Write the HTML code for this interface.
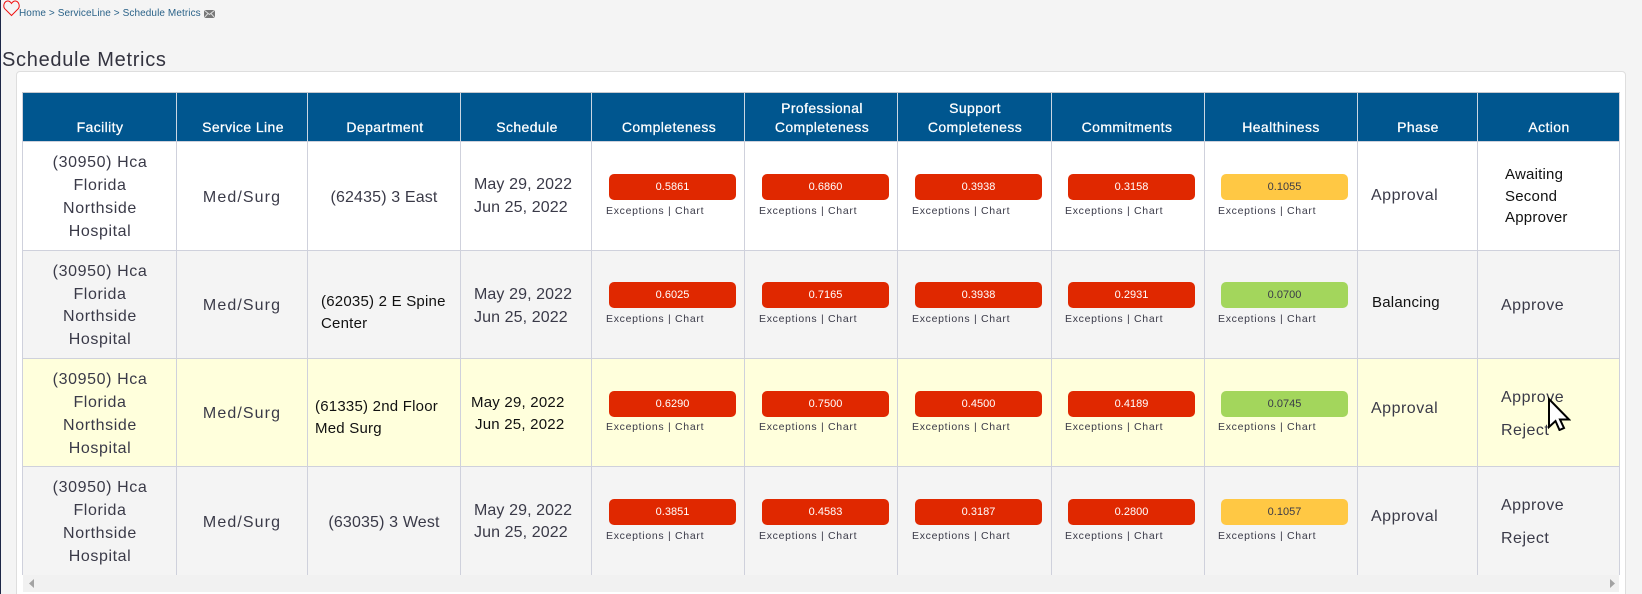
<!DOCTYPE html>
<html><head><meta charset="utf-8"><title>Schedule Metrics</title>
<style>
html,body{margin:0;padding:0;width:1642px;height:594px;overflow:hidden}
body{background:#f4f4f4;font-family:"Liberation Sans",sans-serif;color:#3a3a48}
#w{position:absolute;left:0;top:0;width:1642px;height:594px;overflow:hidden;background:#f4f4f4}
#w div{position:absolute}
.bg{left:23px;width:1596px}
.v{width:1px;top:93px;height:482px;background:#cfd1dc}
.hv{width:1px;top:93px;height:48px;background:#c9d6e3}
.h{background:#cfd1dc;height:1px;left:22px;width:1598px}
.t,.l,.k,.th,.d{white-space:nowrap;line-height:22px;height:22px}
.t{font-size:16px;letter-spacing:.6px;width:200px;text-align:center}
.m{letter-spacing:1.1px}
.p{letter-spacing:.15px}
.l{font-size:16px;letter-spacing:.5px}
.d{font-size:16px;letter-spacing:.1px}
.k{font-size:15px;letter-spacing:.22px;color:#111}
.th{color:#fff;font-size:14px;letter-spacing:.4px;width:150px;text-align:center;-webkit-text-stroke:.25px #fff}
.b{width:127px;height:26px;line-height:26px;border-radius:5px;text-align:center;font-size:11px;color:#fff;background:#e02800}
.y{background:#ffc844;color:#3a3a48}
.g{background:#a3d65c;color:#3a3a48}
.e{font-size:10.5px;letter-spacing:.7px;line-height:14px;white-space:nowrap;color:#3a3a48}
</style></head><body><div id="w">
<div style="left:0;top:0;width:1px;height:594px;background:#1d2747"></div>
<svg style="position:absolute;left:3px;top:0" width="17" height="17" viewBox="0 0 17 17"><path d="M8.5 15.5L1.5 8.5C0 6 1 1.5 4.5 1C6.500 .8 7.500 2 8.500 3.500C9.500 2 10.500 .8 12.500 1C16 1.500 17 6 15.500 8.500Z" fill="none" stroke="#f01010" stroke-width="1"/></svg>
<div style="left:19px;top:7px;font-size:10px;line-height:14px;letter-spacing:.09px;color:#2a6288;white-space:nowrap">Home &gt; ServiceLine &gt; Schedule Metrics</div>
<svg style="position:absolute;left:204px;top:10px" width="11" height="8" viewBox="0 0 11 8"><rect width="11" height="8" fill="#777"/><path d="M0 0L5.500 4.500L11 0M0 8L4 3.500M11 8L7 3.500" stroke="#ddd" fill="none"/></svg>
<div style="left:2px;top:47px;font-size:20px;line-height:26px;letter-spacing:.7px;color:#33333f;white-space:nowrap">Schedule Metrics</div>
<div style="left:16px;top:71px;width:1608px;height:540px;background:#fff;border:1px solid #dedede;border-radius:4px"></div>

<div class="bg" style="top:93px;height:48px;background:#00568f"></div>
<div class="h" style="top:92px;background:#c6c9cf"></div>
<div class="bg" style="top:141px;height:109px;background:#fff"></div>
<div class="bg" style="top:250px;height:109px;background:#f4f4f4"></div>
<div class="bg" style="top:359px;height:107px;background:#ffffdc"></div>
<div class="bg" style="top:466px;height:109px;background:#f4f4f4"></div>
<div class="h" style="top:141px"></div><div class="h" style="top:250px"></div><div class="h" style="top:358px"></div><div class="h" style="top:466px"></div>
<div class="v" style="left:22px"></div><div class="v" style="left:176px"></div><div class="v" style="left:307px"></div><div class="v" style="left:460px"></div><div class="v" style="left:591px"></div><div class="v" style="left:744px"></div><div class="v" style="left:897px"></div><div class="v" style="left:1051px"></div><div class="v" style="left:1204px"></div><div class="v" style="left:1357px"></div><div class="v" style="left:1477px"></div><div class="v" style="left:1619px"></div>
<div class="hv" style="left:176px"></div><div class="hv" style="left:307px"></div><div class="hv" style="left:460px"></div><div class="hv" style="left:591px"></div><div class="hv" style="left:744px"></div><div class="hv" style="left:897px"></div><div class="hv" style="left:1051px"></div><div class="hv" style="left:1204px"></div><div class="hv" style="left:1357px"></div><div class="hv" style="left:1477px"></div>

<div class="th" style="left:25px;top:116px">Facility</div>
<div class="th" style="left:168px;top:116px">Service Line</div>
<div class="th" style="left:310px;top:116px">Department</div>
<div class="th" style="left:452px;top:116px">Schedule</div>
<div class="th" style="left:594px;top:116px">Completeness</div>
<div class="th" style="left:747px;top:97px">Professional</div>
<div class="th" style="left:747px;top:116px">Completeness</div>
<div class="th" style="left:900px;top:97px">Support</div>
<div class="th" style="left:900px;top:116px">Completeness</div>
<div class="th" style="left:1052px;top:116px">Commitments</div>
<div class="th" style="left:1206px;top:116px">Healthiness</div>
<div class="th" style="left:1343px;top:116px">Phase</div>
<div class="th" style="left:1474px;top:116px">Action</div>

<!-- Facility -->
<div class="t" style="left:0;top:152px">(30950) Hca</div><div class="t" style="left:0;top:175px">Florida</div><div class="t" style="left:0;top:198px">Northside</div><div class="t" style="left:0;top:221px">Hospital</div>
<div class="t" style="left:0;top:261px">(30950) Hca</div><div class="t" style="left:0;top:284px">Florida</div><div class="t" style="left:0;top:306px">Northside</div><div class="t" style="left:0;top:329px">Hospital</div>
<div class="t" style="left:0;top:369px">(30950) Hca</div><div class="t" style="left:0;top:392px">Florida</div><div class="t" style="left:0;top:415px">Northside</div><div class="t" style="left:0;top:438px">Hospital</div>
<div class="t" style="left:0;top:477px">(30950) Hca</div><div class="t" style="left:0;top:500px">Florida</div><div class="t" style="left:0;top:523px">Northside</div><div class="t" style="left:0;top:546px">Hospital</div>
<!-- Service line -->
<div class="t m" style="left:142px;top:187px">Med/Surg</div><div class="t m" style="left:142px;top:295px">Med/Surg</div><div class="t m" style="left:142px;top:403px">Med/Surg</div><div class="t m" style="left:142px;top:512px">Med/Surg</div>
<!-- Department -->
<div class="t p" style="left:284px;top:187px">(62435) 3 East</div>
<div class="k" style="left:321px;top:291px">(62035) 2 E Spine</div><div class="k" style="left:321px;top:313px">Center</div>
<div class="k" style="left:315px;top:396px">(61335) 2nd Floor</div><div class="k" style="left:315px;top:418px">Med Surg</div>
<div class="t p" style="left:284px;top:512px">(63035) 3 West</div>
<!-- Schedule -->
<div class="d" style="left:474px;top:174px">May 29, 2022</div><div class="d" style="left:474px;top:197px">Jun 25, 2022</div>
<div class="d" style="left:474px;top:284px">May 29, 2022</div><div class="d" style="left:474px;top:307px">Jun 25, 2022</div>
<div class="k" style="left:471px;top:392px">May 29, 2022</div><div class="k" style="left:475px;top:414px">Jun 25, 2022</div>
<div class="d" style="left:474px;top:500px">May 29, 2022</div><div class="d" style="left:474px;top:522px">Jun 25, 2022</div>
<!-- Phase -->
<div class="l" style="left:1371px;top:185px">Approval</div>
<div class="k" style="left:1372px;top:292px">Balancing</div>
<div class="l" style="left:1371px;top:398px">Approval</div>
<div class="l" style="left:1371px;top:506px">Approval</div>
<!-- Action -->
<div class="k" style="left:1505px;top:164px">Awaiting</div><div class="k" style="left:1505px;top:186px">Second</div><div class="k" style="left:1505px;top:207px">Approver</div>
<div class="l" style="left:1501px;top:295px">Approve</div>
<div class="l" style="left:1501px;top:387px">Approve</div><div class="l" style="left:1501px;top:420px">Reject</div>
<div class="l" style="left:1501px;top:495px">Approve</div><div class="l" style="left:1501px;top:528px">Reject</div>

<!-- Row 1 -->
<div class="b" style="left:609px;top:174px">0.5861</div><div class="e" style="left:606px;top:204px">Exceptions | Chart</div>
<div class="b" style="left:762px;top:174px">0.6860</div><div class="e" style="left:759px;top:204px">Exceptions | Chart</div>
<div class="b" style="left:915px;top:174px">0.3938</div><div class="e" style="left:912px;top:204px">Exceptions | Chart</div>
<div class="b" style="left:1068px;top:174px">0.3158</div><div class="e" style="left:1065px;top:204px">Exceptions | Chart</div>
<div class="b y" style="left:1221px;top:174px">0.1055</div><div class="e" style="left:1218px;top:204px">Exceptions | Chart</div>
<!-- Row 2 -->
<div class="b" style="left:609px;top:282px">0.6025</div><div class="e" style="left:606px;top:312px">Exceptions | Chart</div>
<div class="b" style="left:762px;top:282px">0.7165</div><div class="e" style="left:759px;top:312px">Exceptions | Chart</div>
<div class="b" style="left:915px;top:282px">0.3938</div><div class="e" style="left:912px;top:312px">Exceptions | Chart</div>
<div class="b" style="left:1068px;top:282px">0.2931</div><div class="e" style="left:1065px;top:312px">Exceptions | Chart</div>
<div class="b g" style="left:1221px;top:282px">0.0700</div><div class="e" style="left:1218px;top:312px">Exceptions | Chart</div>
<!-- Row 3 -->
<div class="b" style="left:609px;top:391px">0.6290</div><div class="e" style="left:606px;top:420px">Exceptions | Chart</div>
<div class="b" style="left:762px;top:391px">0.7500</div><div class="e" style="left:759px;top:420px">Exceptions | Chart</div>
<div class="b" style="left:915px;top:391px">0.4500</div><div class="e" style="left:912px;top:420px">Exceptions | Chart</div>
<div class="b" style="left:1068px;top:391px">0.4189</div><div class="e" style="left:1065px;top:420px">Exceptions | Chart</div>
<div class="b g" style="left:1221px;top:391px">0.0745</div><div class="e" style="left:1218px;top:420px">Exceptions | Chart</div>
<!-- Row 4 -->
<div class="b" style="left:609px;top:499px">0.3851</div><div class="e" style="left:606px;top:529px">Exceptions | Chart</div>
<div class="b" style="left:762px;top:499px">0.4583</div><div class="e" style="left:759px;top:529px">Exceptions | Chart</div>
<div class="b" style="left:915px;top:499px">0.3187</div><div class="e" style="left:912px;top:529px">Exceptions | Chart</div>
<div class="b" style="left:1068px;top:499px">0.2800</div><div class="e" style="left:1065px;top:529px">Exceptions | Chart</div>
<div class="b y" style="left:1221px;top:499px">0.1057</div><div class="e" style="left:1218px;top:529px">Exceptions | Chart</div>

<!-- Scrollbar -->
<div style="left:23px;top:575px;width:1596px;height:17px;background:#f1f1f1"></div>
<svg style="position:absolute;left:28px;top:579px" width="8" height="9" viewBox="0 0 8 9"><path d="M6 0V9L1 4.500Z" fill="#a3a3a3"/></svg>
<svg style="position:absolute;left:1608px;top:579px" width="8" height="9" viewBox="0 0 8 9"><path d="M2 0V9L7 4.500Z" fill="#a3a3a3"/></svg>
<!-- Cursor -->
<svg style="position:absolute;left:1547px;top:397px" width="24" height="34" viewBox="0 0 24 34"><path d="M2 2V30L8.500 24L12.500 33L17 31L13 22.500L22 22.500Z" fill="#fff" stroke="#000" stroke-width="2"/></svg>
</div></body></html>
